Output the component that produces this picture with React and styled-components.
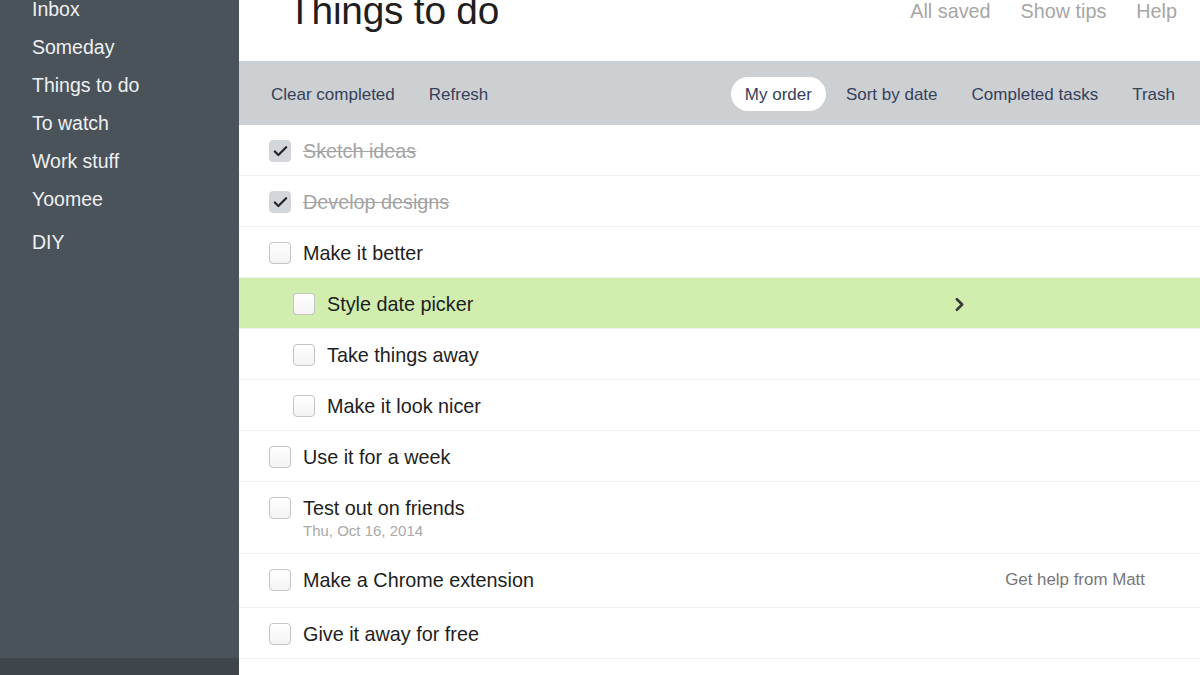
import React from 'react';
import styled, { createGlobalStyle } from 'styled-components';
import { Check, ChevronRight } from 'lucide-react';

const GlobalStyle = createGlobalStyle`
  html, body {
    margin: 0;
    padding: 0;
    height: 100%;
    overflow: hidden;
  }
  body {
    font-family: "Liberation Sans", Arial, sans-serif;
    background: #fff;
  }
`;

const lists = [
  ['Inbox', 'Someday', 'Things to do', 'To watch', 'Work stuff', 'Yoomee'],
  ['DIY'],
];

const tasks = [
  { text: 'Sketch ideas', done: true },
  { text: 'Develop designs', done: true },
  { text: 'Make it better' },
  { text: 'Style date picker', nested: true, active: true },
  { text: 'Take things away', nested: true },
  { text: 'Make it look nicer', nested: true },
  { text: 'Use it for a week' },
  { text: 'Test out on friends', date: 'Thu, Oct 16, 2014' },
  { text: 'Make a Chrome extension', note: 'Get help from Matt' },
  { text: 'Give it away for free' },
];

const Layout = styled.div`
  display: flex;
  height: 100vh;
`;

const Sidebar = styled.aside`
  width: 239px;
  flex-shrink: 0;
  background: #4a525a;
  display: flex;
  flex-direction: column;
`;

const ListGroup = styled.ul`
  list-style: none;
  margin: ${p => p.$first ? '-10px' : '5px'} 0 0;
  padding: 0 0 0 32px;
`;

const ListItem = styled.li`
  color: #eef0f2;
  font-size: 19.5px;
  line-height: 38px;
`;

const SidebarFoot = styled.div`
  margin-top: auto;
  height: 17px;
  background: #3e454b;
`;

const Main = styled.main`
  flex: 1;
  display: flex;
  flex-direction: column;
  min-width: 0;
`;

const Header = styled.header`
  height: 61px;
  display: flex;
  align-items: flex-start;
  justify-content: space-between;
  padding: 0 23px 0 49px;
  overflow: hidden;
`;

const Title = styled.h1`
  margin: -8px 0 0;
  font-size: 38.8px;
  line-height: 1;
  font-weight: 400;
  color: #1e1e1e;
  letter-spacing: -0.2px;
`;

const HeaderLinks = styled.nav`
  display: flex;
  gap: 30px;
  padding-top: 2px;
`;

const HeaderLink = styled.span`
  font-size: 19.8px;
  line-height: 1;
  color: #a6a6a6;
`;

const Toolbar = styled.div`
  height: 64px;
  box-sizing: border-box;
  padding: 2px 11px 0 18px;
  background: #cdd0d3;
  display: flex;
  align-items: center;
  justify-content: space-between;
`;

const ToolGroup = styled.div`
  display: flex;
  align-items: center;
  gap: 6px;
`;

const ToolButton = styled.span`
  font-size: 17px;
  height: 34px;
  line-height: 36px;
  overflow: hidden;
  padding: 0 14px;
  border-radius: 17px;
  color: #35415a;
  background: ${p => p.$active ? '#fff' : 'transparent'};
`;

const TaskList = styled.ul`
  list-style: none;
  margin: 0;
  padding: 0;
`;

const Row = styled.li`
  display: flex;
  align-items: flex-start;
  padding: 15px 0 ${p => p.$roomy ? 16 : 13}px ${p => p.$nested ? 54 : 30}px;
  border-bottom: 1px solid #f0f0f0;
  background: ${p => p.$active ? '#d1eeaf' : '#fff'};
`;

const Box = styled.span`
  width: 22px;
  height: 22px;
  box-sizing: border-box;
  flex-shrink: 0;
  border-radius: 4px;
  display: flex;
  align-items: center;
  justify-content: center;
  border: 1px solid ${p => p.$checked ? '#d3d7dc' : '#c4c4c4'};
  background: ${p => p.$checked ? '#d3d7dc' : 'linear-gradient(#fff, #f3f3f3)'};
  color: #262626;
`;

const Body = styled.div`
  flex: 1;
  margin-left: 12px;
  display: flex;
  flex-direction: column;
`;

const Label = styled.span`
  font-size: 19.8px;
  line-height: 22px;
  color: ${p => p.$done ? '#a3a3a3' : '#1e1e1e'};
  text-decoration: ${p => p.$done ? 'line-through' : 'none'};
`;

const DateLine = styled.span`
  margin-top: 3px;
  font-size: 15px;
  line-height: 18px;
  color: #a9a9a9;
`;

const Note = styled.span`
  font-size: 16.9px;
  line-height: 22px;
  color: #777;
  margin-right: 55px;
`;

const Arrow = styled.span`
  display: flex;
  align-items: center;
  height: 22px;
  margin-right: 230px;
  color: #3b3b3b;
`;

function Task({ task }) {
  return (
    <Row $nested={task.nested} $active={task.active} $roomy={!!task.note}>
      <Box $checked={task.done}>
        {task.done && <Check size={17} strokeWidth={3.2} />}
      </Box>
      <Body>
        <Label $done={task.done}>{task.text}</Label>
        {task.date && <DateLine>{task.date}</DateLine>}
      </Body>
      {task.note && <Note>{task.note}</Note>}
      {task.active && (
        <Arrow>
          <ChevronRight size={21} strokeWidth={3} />
        </Arrow>
      )}
    </Row>
  );
}

export default function App() {
  return (
    <>
      <GlobalStyle />
      <Layout>
        <Sidebar>
          {lists.map((group, i) => (
            <ListGroup key={i} $first={i === 0}>
              {group.map(name => <ListItem key={name}>{name}</ListItem>)}
            </ListGroup>
          ))}
          <SidebarFoot />
        </Sidebar>
        <Main>
          <Header>
            <Title>Things to do</Title>
            <HeaderLinks>
              <HeaderLink>All saved</HeaderLink>
              <HeaderLink>Show tips</HeaderLink>
              <HeaderLink>Help</HeaderLink>
            </HeaderLinks>
          </Header>
          <Toolbar>
            <ToolGroup>
              <ToolButton>Clear completed</ToolButton>
              <ToolButton>Refresh</ToolButton>
            </ToolGroup>
            <ToolGroup>
              <ToolButton $active>My order</ToolButton>
              <ToolButton>Sort by date</ToolButton>
              <ToolButton>Completed tasks</ToolButton>
              <ToolButton>Trash</ToolButton>
            </ToolGroup>
          </Toolbar>
          <TaskList>
            {tasks.map(t => <Task key={t.text} task={t} />)}
          </TaskList>
        </Main>
      </Layout>
    </>
  );
}
